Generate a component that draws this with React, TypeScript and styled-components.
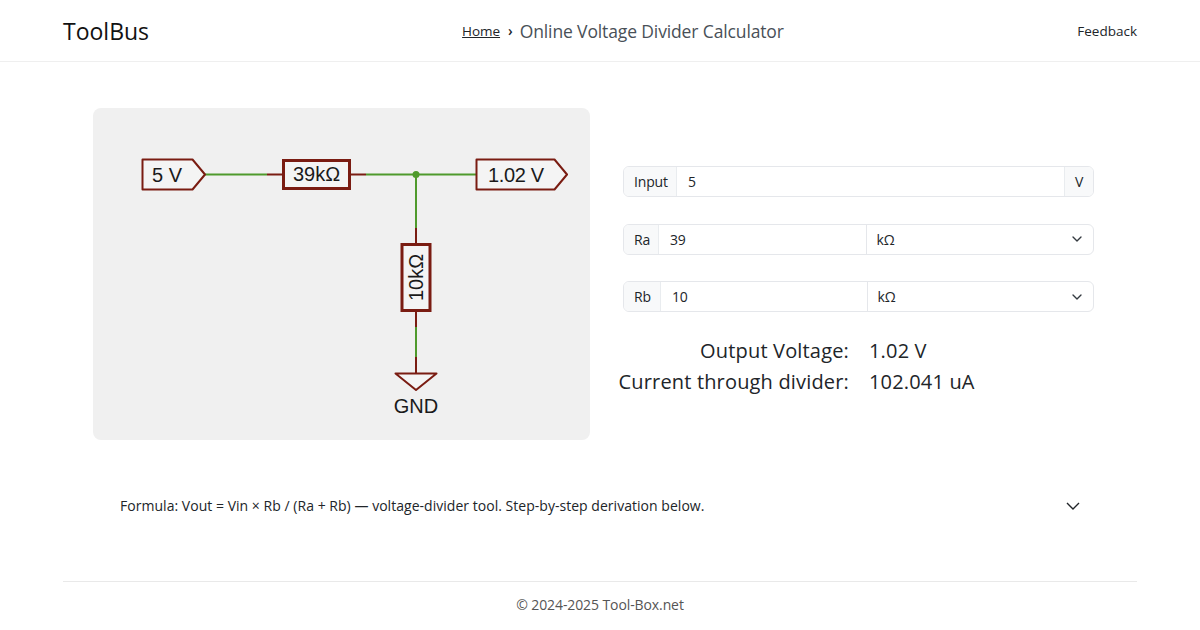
import { ChevronDown } from "lucide-react";
import styled, { createGlobalStyle } from "styled-components";

const GlobalStyle = createGlobalStyle`
  html, body {
    margin: 0;
    padding: 0;
    background: #fff;
    color: #212529;
    font-family: "Open Sans", "Noto Sans", "Liberation Sans", sans-serif;
  }
  * { box-sizing: border-box; }
`;

const Page = styled.div`
  width: 1200px;
  height: 630px;
  display: flex;
  flex-direction: column;
  overflow: hidden;
`;

const Header = styled.header`
  height: 62px;
  flex: none;
  display: flex;
  align-items: center;
  padding: 0 63px;
  border-bottom: 1px solid #efefef;
`;

const Brand = styled.div`
  font-size: 23px;
  color: #111;
`;

const Crumbs = styled.nav`
  margin-left: 313px;
  display: flex;
  align-items: center;
`;

const HomeLink = styled.a`
  font-size: 13.5px;
  color: #212529;
  text-decoration: underline;
  letter-spacing: -0.05px;
`;

const Sep = styled.span`
  font-size: 14px;
  margin: 0 7px 0 8px;
  font-weight: 600;
`;

const Current = styled.span`
  font-size: 17.5px;
  color: #495057;
  letter-spacing: -0.13px;
`;

const FeedbackLink = styled.a`
  margin-left: auto;
  font-size: 13.5px;
  color: #212529;
`;

const Main = styled.main`
  display: flex;
  gap: 33px;
  padding: 46px 106px 0 93px;
`;

const DiagramCard = styled.div`
  width: 497px;
  height: 332px;
  flex: none;
  background: #f0f0f0;
  border-radius: 8px;
  overflow: hidden;
`;

const FormColumn = styled.div`
  flex: 1;
  padding-top: 58px;
  display: flex;
  flex-direction: column;
`;

const InputRow = styled.div`
  height: 31px;
  margin-bottom: 26.5px;
  display: flex;
  border: 1px solid #e5e7eb;
  border-radius: 6px;
  overflow: hidden;
  font-size: 14px;
  letter-spacing: -0.15px;
`;

const Addon = styled.span<{ $end?: boolean; $width: number }>`
  flex: none;
  width: ${(p) => p.$width}px;
  display: flex;
  align-items: center;
  padding-left: 10px;
  background: #f8f9fa;
  ${(p) => (p.$end ? "border-left" : "border-right")}: 1px solid #e9ecef;
`;

const ValueInput = styled.input<{ $grow: number }>`
  flex: ${(p) => p.$grow} 1 0;
  min-width: 0;
  border: 0;
  outline: 0;
  padding: 0 9px 0 11px;
  font: inherit;
  letter-spacing: inherit;
  color: #212529;
  background: #fff;
`;

const UnitSelect = styled.div`
  flex: 217 1 0;
  position: relative;
  display: flex;
  align-items: center;
  padding-left: 10px;
  border-left: 1px solid #e5e7eb;
`;

const SelectCaret = styled(ChevronDown)`
  position: absolute;
  right: 8px;
  top: 6.5px;
  width: 16px;
  height: 16px;
  color: #343a40;
`;

const Results = styled.div`
  margin-top: -3.5px;
  margin-left: -5px;
  display: grid;
  grid-template-columns: 231px auto;
  column-gap: 20px;
  font-size: 20px;
  line-height: 31px;
  letter-spacing: 0.17px;
  color: #212529;
`;

const ResultLabel = styled.div`
  text-align: right;
  white-space: nowrap;
`;

const ResultValue = styled.div`
  white-space: nowrap;
`;

const Formula = styled.section`
  margin: 50px 117px 0 120px;
  height: 32px;
  display: flex;
  align-items: center;
  justify-content: space-between;
  font-size: 14px;
  letter-spacing: 0.03px;
`;

const FormulaText = styled.span`
  padding-bottom: 2px;
`;

const FormulaCaret = styled.svg`
  width: 14px;
  height: 8px;
  margin-right: 3px;
  fill: none;
  stroke: #212529;
  stroke-width: 1.4;
`;

const Footer = styled.footer`
  margin: 59px 63px 0;
  padding-top: 13px;
  border-top: 1px solid #e9e9e9;
  text-align: center;
  font-size: 14px;
  letter-spacing: -0.1px;
  color: #555;
`;

const RED = "#7a1c12";
const GREEN = "#4f9a2c";

const Wire = styled.path`
  fill: none;
  stroke-width: 2;
`;

const Part = styled.path`
  fill: #f4f4f4;
  stroke: ${RED};
  stroke-width: 2;
  stroke-linejoin: round;
`;

const Resistor = styled.rect`
  fill: #f4f4f4;
  stroke: ${RED};
  stroke-width: 3;
`;

const Label = styled.text`
  font-family: "Liberation Sans", Arial, sans-serif;
  font-size: 20px;
  fill: #1a1a1a;
`;

// coordinates are relative to the card corner at 93,108
const VoltageDivider = () => (
  <svg width="497" height="332" viewBox="0 0 497 332">
    <Wire stroke={GREEN} d="M112 66.5H174M273 66.5H383M323 66.5V120M323 219V249" />
    <Wire stroke={RED} d="M174 66.5H190M257 66.5H273M323 120V136M323 203V219M323 249V265" />
    <circle cx="323" cy="66.5" r="3.5" fill={GREEN} />

    <Part d="M49.5 51.5H99.5L112 66.5L99.5 81.5H49.5Z" />
    <Label x="59" y="73.5">5 V</Label>

    <Resistor x="190.5" y="52.5" width="66" height="28" />
    <Label x="223.5" y="73" textAnchor="middle">39kΩ</Label>

    <Part d="M383.5 51.5H461.5L474 66.5L461.5 81.5H383.5Z" />
    <Label x="395" y="73.5" textLength="56">1.02 V</Label>

    <Resistor x="309" y="136.5" width="28" height="66" />
    <Label x="323" y="169.5" textAnchor="middle" dominantBaseline="central" transform="rotate(-90 323 169.5)">10kΩ</Label>

    <Part d="M302.5 265.5H343.5L323 282Z" />
    <Label x="323" y="305" textAnchor="middle">GND</Label>
  </svg>
);

const App = () => {
  return (
    <Page>
      <GlobalStyle />
      <Header>
        <Brand>ToolBus</Brand>
        <Crumbs>
          <HomeLink href="#">Home</HomeLink>
          <Sep>›</Sep>
          <Current>Online Voltage Divider Calculator</Current>
        </Crumbs>
        <FeedbackLink>Feedback</FeedbackLink>
      </Header>
      <Main>
        <DiagramCard>
          <VoltageDivider />
        </DiagramCard>
        <FormColumn>
          <InputRow>
            <Addon $width={53}>Input</Addon>
            <ValueInput $grow={1} defaultValue="5" />
            <Addon $width={29} $end>V</Addon>
          </InputRow>
          <InputRow>
            <Addon $width={35}>Ra</Addon>
            <ValueInput $grow={187} defaultValue="39" />
            <UnitSelect>
              kΩ
              <SelectCaret />
            </UnitSelect>
          </InputRow>
          <InputRow>
            <Addon $width={37}>Rb</Addon>
            <ValueInput $grow={187} defaultValue="10" />
            <UnitSelect>
              kΩ
              <SelectCaret />
            </UnitSelect>
          </InputRow>
          <Results>
            <ResultLabel>Output Voltage:</ResultLabel>
            <ResultValue>1.02 V</ResultValue>
            <ResultLabel>Current through divider:</ResultLabel>
            <ResultValue>102.041 uA</ResultValue>
          </Results>
        </FormColumn>
      </Main>
      <Formula>
        <FormulaText>
          Formula: Vout = Vin × Rb / (Ra + Rb) — voltage-divider tool. Step-by-step derivation below.
        </FormulaText>
        <FormulaCaret viewBox="0 0 14 8">
          <path d="M1 1L7 7L13 1" />
        </FormulaCaret>
      </Formula>
      <Footer>© 2024-2025 Tool-Box.net</Footer>
    </Page>
  );
};

export default App;
